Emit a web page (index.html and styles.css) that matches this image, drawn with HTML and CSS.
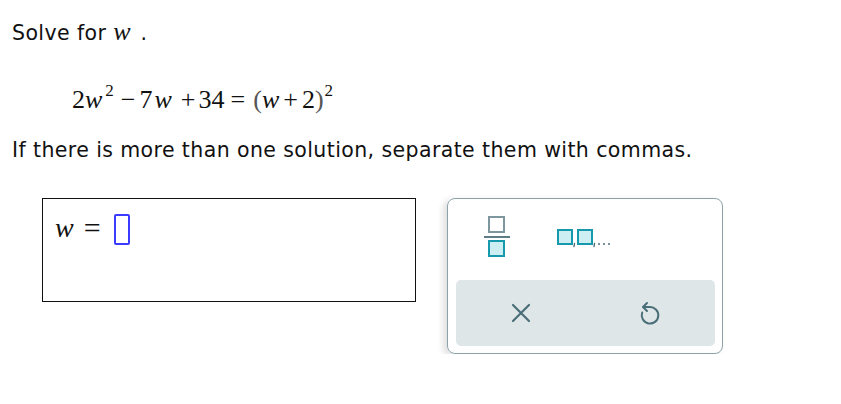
FILE: index.html
```html
<!DOCTYPE html>
<html>
<head>
<meta charset="utf-8">
<link rel="stylesheet" href="styles.css">
</head>
<body>
<div class="page">
  <p class="prompt">Solve for <span class="var">w</span> .</p>
  <div class="equation">
    <span>2</span><span class="mi">w</span><sup class="sup">2</sup><span class="mo minus">−</span><span>7</span><span class="mi w2">w</span><span class="mo plus1">+</span><span class="n34">34</span><span class="mo eqs">=</span><span class="paren lp">(</span><span class="mi">w</span><span class="mo">+</span><span>2</span><span class="paren">)</span><sup class="sup sup2">2</sup>
  </div>
  <p class="instr">If there is more than one solution, separate them with commas.</p>
  <div class="row">
    <div class="answer">
      <span class="mi">w</span><span class="eq">=</span><span class="slot"></span>
    </div>
    <div class="keypad">
      <div class="keys">
        <div class="key">
          <svg width="28" height="42" viewBox="0 0 28 42">
            <rect x="6" y="1" width="15" height="15" fill="#fff" stroke="#7e979f" stroke-width="2"/>
            <rect x="1" y="20" width="26" height="2" fill="#5d7c85"/>
            <rect x="6" y="25" width="15" height="15" fill="#cdeef3" stroke="#1698ad" stroke-width="2"/>
          </svg>
        </div>
        <div class="key">
          <svg width="56" height="20" viewBox="0 0 56 20">
            <rect x="1" y="1" width="14" height="14" fill="#cdeef3" stroke="#1698ad" stroke-width="2"/>
            <path d="M17.5 14.5 L17 17.5" stroke="#4a6e78" stroke-width="1.4" stroke-linecap="round"/>
            <rect x="21" y="1" width="14" height="14" fill="#cdeef3" stroke="#1698ad" stroke-width="2"/>
            <path d="M37.5 14.5 L37 17.5" stroke="#4a6e78" stroke-width="1.4" stroke-linecap="round"/>
            <circle cx="42" cy="15" r="1" fill="#4a6e78"/>
            <circle cx="47" cy="15" r="1" fill="#4a6e78"/>
            <circle cx="52" cy="15" r="1" fill="#4a6e78"/>
          </svg>
        </div>
        <div class="key"></div>
      </div>
      <div class="actions">
        <div class="action">
          <svg width="20" height="20" viewBox="0 0 20 20">
            <path d="M2 2 L18 18 M18 2 L2 18" stroke="#4a6e78" stroke-width="2.2" stroke-linecap="round"/>
          </svg>
        </div>
        <div class="action">
          <svg width="22" height="26" viewBox="0 0 22 26">
            <path d="M3.2 12.5 A8.3 8.3 0 1 0 10.5 7 L4.5 7" fill="none" stroke="#4a6e78" stroke-width="2" stroke-linecap="round"/>
            <path d="M8 3 L4 7 L8 11" fill="none" stroke="#4a6e78" stroke-width="2" stroke-linecap="round" stroke-linejoin="round"/>
          </svg>
        </div>
      </div>
    </div>
  </div>
</div>
</body>
</html>
```
FILE: styles.css
```css
html, body {
  margin: 0;
  padding: 0;
  background: #fff;
}
.page {
  padding: 20px 12px 0 12px;
  font-family: "DejaVu Sans", Verdana, sans-serif;
  font-size: 20.5px;
  letter-spacing: 0.4px;
  color: #111;
}
.prompt {
  margin: 0;
  line-height: 24px;
}
.var {
  font-family: "Liberation Serif", "Times New Roman", serif;
  font-style: italic;
  font-size: 26px;
  letter-spacing: 0;
  margin: 0 3px 0 0;
}
.equation {
  margin: 0;
  padding-left: 60px;
  padding-top: 40px;
  height: 30px;
  line-height: 30px;
  font-family: "Liberation Serif", "Times New Roman", serif;
  font-size: 26px;
  letter-spacing: 0;
  color: #111;
  white-space: nowrap;
}
.mi {
  font-style: italic;
}
.sup {
  font-size: 17px;
  vertical-align: 12px;
  line-height: 0;
  margin-left: 3px;
}
.sup2 {
  margin-left: 1px;
}
.mo {
  margin: 0 4px;
}
.minus {
  margin-left: 7px;
  margin-right: 4px;
}
.w2 {
  margin-left: 2px;
}
.plus1 {
  margin-left: 9px;
  margin-right: 3px;
}
.eqs {
  margin-left: 6px;
  margin-right: 8px;
}
.paren {
  color: #555;
}
.instr {
  margin: 0;
  padding-top: 23px;
  line-height: 24px;
}
.row {
  display: flex;
  align-items: flex-start;
  margin-top: 36px;
  margin-left: 30px;
  gap: 31px;
}
.answer {
  box-sizing: border-box;
  width: 374px;
  height: 104px;
  border: 1px solid #111;
  padding: 15px 12px;
  display: flex;
  align-items: flex-start;
  font-family: "Liberation Serif", "Times New Roman", serif;
  font-size: 28px;
  letter-spacing: 0;
}
.answer .mi {
  margin-top: -1px;
  line-height: 30px;
}
.eq {
  margin: -1px 13px 0 10px;
  line-height: 30px;
  font-size: 30px;
}
.slot {
  box-sizing: border-box;
  width: 16px;
  height: 31px;
  border: 2px solid #3b3bff;
  border-radius: 2px;
}
.keypad {
  box-sizing: border-box;
  width: 276px;
  height: 156px;
  border: 1px solid #8da2a8;
  border-radius: 8px;
  box-shadow: -4px 2px 6px rgba(0, 0, 0, 0.12);
  padding: 0 7px 7px 8px;
  display: flex;
  flex-direction: column;
}
.keys {
  display: grid;
  grid-template-columns: repeat(3, 1fr);
  height: 81px;
}
.key {
  display: flex;
  justify-content: center;
  align-items: flex-start;
}
.key:first-child {
  padding-top: 17px;
  padding-right: 4px;
}
.key:nth-child(2) {
  padding-top: 30px;
}
.actions {
  flex: 1;
  background: #dfe6e8;
  border-radius: 5px;
  display: grid;
  grid-template-columns: 1fr 1fr;
}
.action {
  display: flex;
  justify-content: center;
  align-items: center;
}
```
